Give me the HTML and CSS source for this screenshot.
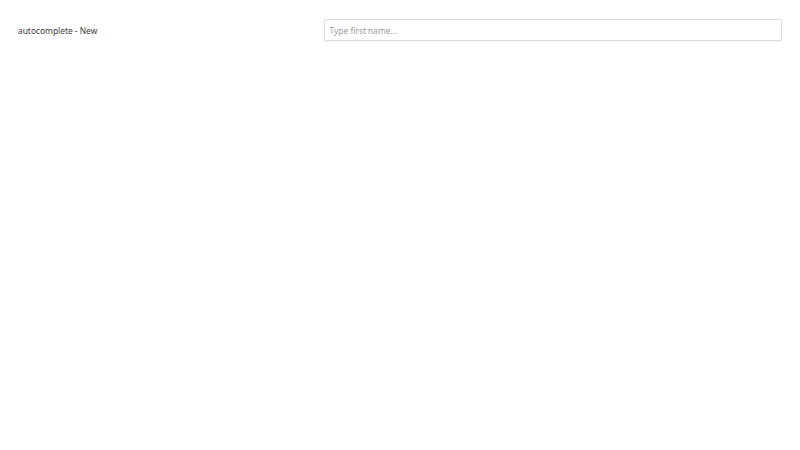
FILE: index.html
```html
<!DOCTYPE html>
<html>
<head>
<meta charset="utf-8">
<link rel="stylesheet" href="styles.css">
</head>
<body>
<div class="row">
  <div class="label">autocomplete - New</div>
  <div class="field"><input class="input" type="text" placeholder="Type first name..."></div>
</div>
</body>
</html>
```
FILE: styles.css
```css
html, body { margin: 0; padding: 0; background: #fff; }
body { font-family: "Noto Sans", "Open Sans", sans-serif; color: #333; }
.row {
  display: grid;
  grid-template-columns: 40% 60%;
  align-items: center;
  padding: 19px 18px;
}
.label { font-size: 8.4px; color: #3a3a3a; }
.field { display: flex; }
.input {
  flex: 1;
  box-sizing: border-box;
  height: 22px;
  border: 1px solid #dedede;
  border-radius: 2px;
  padding: 0 5px;
  font-family: "Noto Sans", "Open Sans", sans-serif;
  font-size: 8.4px;
  color: #333;
  outline: none;
  box-shadow: 0 1px 2px rgba(0,0,0,0.05);
}
.input::placeholder { color: #9a9a9a; }
```
